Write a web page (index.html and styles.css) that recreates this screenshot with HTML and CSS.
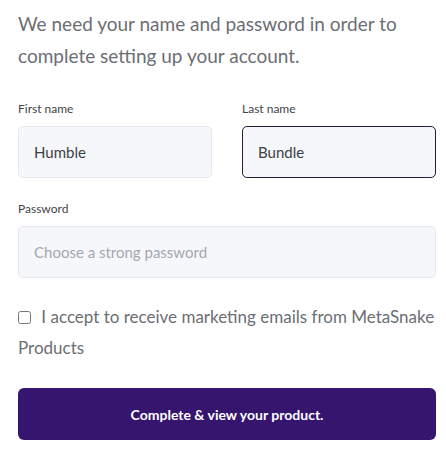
FILE: index.html
```html
<!DOCTYPE html>
<html>
<head>
<meta charset="utf-8">
<link rel="stylesheet" href="styles.css">
</head>
<body>
<form class="form">
  <p class="intro">We need your name and password in order to complete setting up your account.</p>
  <div class="row">
    <div class="field">
      <label class="label">First name</label>
      <input class="input" type="text" value="Humble">
    </div>
    <div class="field">
      <label class="label">Last name</label>
      <input class="input input-focus" type="text" value="Bundle">
    </div>
  </div>
  <div class="field">
    <label class="label">Password</label>
    <input class="input" type="password" placeholder="Choose a strong password">
  </div>
  <label class="consent"><input class="check" type="checkbox"> I accept to receive marketing emails from MetaSnake Products</label>
  <button class="submit" type="button">Complete &amp; view your product.</button>
</form>
</body>
</html>
```
FILE: styles.css
```css
html, body {
  margin: 0;
  padding: 0;
  background: #ffffff;
}
body {
  font-family: "Lato", "Open Sans", sans-serif;
  color: #6b6e74;
}
.form {
  padding: 8px 10px 0 18px;
  display: flex;
  flex-direction: column;
}
.intro {
  margin: 0 0 29px 0;
  font-size: 19px;
  line-height: 32px;
  color: #6b6e74;
}
.row {
  display: flex;
  gap: 30px;
  margin-bottom: 23px;
}
.row .field {
  flex: 1;
}
.field {
  display: flex;
  flex-direction: column;
}
.label {
  font-size: 12px;
  line-height: 16px;
  color: #3f4348;
  margin-bottom: 9px;
}
.input {
  box-sizing: border-box;
  height: 52px;
  width: 100%;
  border: 1px solid #e5e7ec;
  border-radius: 5px;
  background: #f6f7fb;
  padding: 0 15px;
  font-family: inherit;
  font-size: 15px;
  color: #3b3f45;
  outline: none;
}
.input::placeholder {
  color: #a4a7ad;
}
.input-focus {
  border-color: #2b1940;
}
.consent {
  margin-top: 23px;
  font-size: 17px;
  line-height: 31px;
  color: #6b6e74;
}
.check {
  margin: 0 6px 0 0;
  width: 13px;
  height: 13px;
  vertical-align: -1px;
}
.submit {
  margin-top: 25px;
  height: 52px;
  border: none;
  border-radius: 6px;
  background: #35156d;
  color: #ffffff;
  font-family: inherit;
  font-weight: 700;
  font-size: 14px;
}
```
